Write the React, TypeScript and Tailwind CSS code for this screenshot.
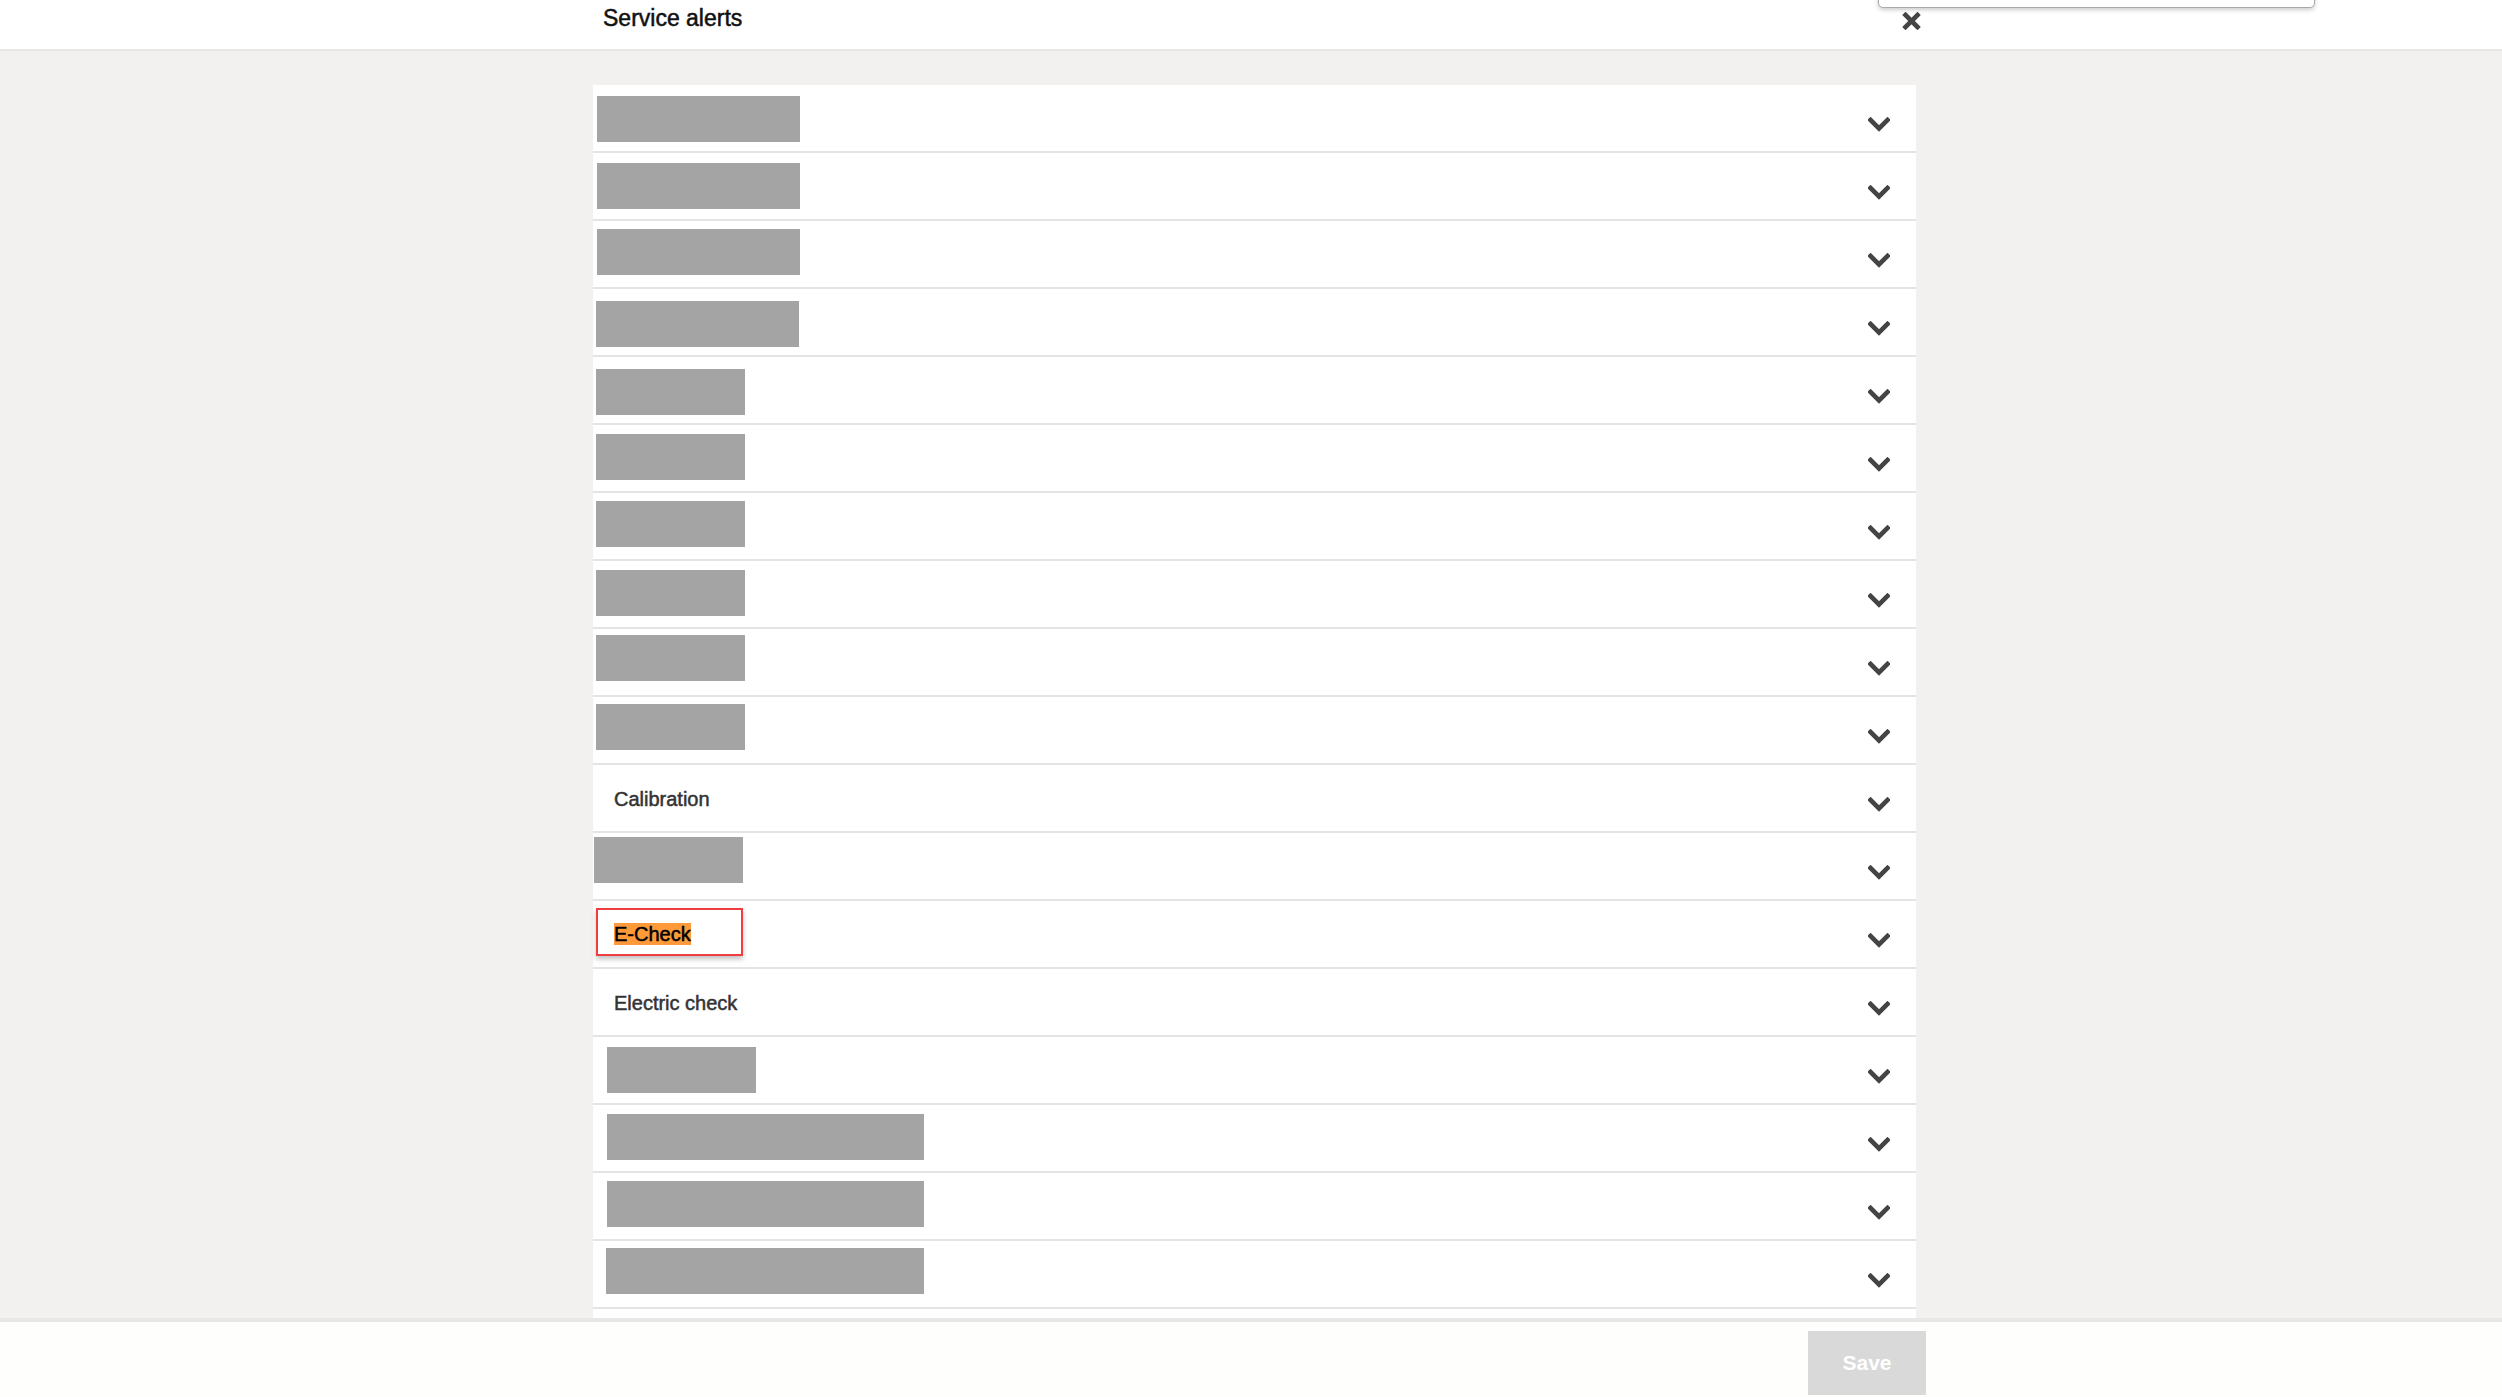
import React from 'react';

type Row =
  | { kind: 'block'; left: number; width: number; top: number }
  | { kind: 'text'; label: string }
  | { kind: 'selected'; label: string };

const rows: Row[] = [
  { kind: 'block', left: 4, width: 203, top: 11 },
  { kind: 'block', left: 4, width: 203, top: 10 },
  { kind: 'block', left: 4, width: 203, top: 8 },
  { kind: 'block', left: 3, width: 203, top: 12 },
  { kind: 'block', left: 3, width: 149, top: 12 },
  { kind: 'block', left: 3, width: 149, top: 9 },
  { kind: 'block', left: 3, width: 149, top: 8 },
  { kind: 'block', left: 3, width: 149, top: 9 },
  { kind: 'block', left: 3, width: 149, top: 6 },
  { kind: 'block', left: 3, width: 149, top: 7 },
  { kind: 'text', label: 'Calibration' },
  { kind: 'block', left: 1, width: 149, top: 4 },
  { kind: 'selected', label: 'E-Check' },
  { kind: 'text', label: 'Electric check' },
  { kind: 'block', left: 14, width: 149, top: 10 },
  { kind: 'block', left: 14, width: 317, top: 9 },
  { kind: 'block', left: 14, width: 317, top: 8 },
  { kind: 'block', left: 13, width: 318, top: 7 },
  { kind: 'block', left: 14, width: 149, top: 9 },
];

const Chevron = () => (
  <svg width="22" height="15" viewBox="0 0 22 15" className="block">
    <polyline
      points="2.5,3 11,11.5 19.5,3"
      fill="none"
      stroke="#444444"
      strokeWidth="4.6"
      strokeLinecap="square"
      strokeLinejoin="miter"
    />
  </svg>
);

const CloseIcon = () => (
  <svg width="19" height="18" viewBox="0 0 19 18" className="block">
    <path d="M3.5 3 L15.5 15 M15.5 3 L3.5 15" stroke="#444444" strokeWidth="4.6" strokeLinecap="square" />
  </svg>
);

const AlertRow: React.FC<{ row: Row }> = ({ row }) => {
  return (
    <div className="flex h-[68px] border-b-2 border-[#e4e4e4]">
      <div className="flex-1 flex">
        {row.kind === 'block' && (
          <div
            className="h-[46px] bg-[#a4a4a4]"
            style={{ marginLeft: row.left, marginTop: row.top, width: row.width }}
          />
        )}
        {row.kind === 'text' && (
          <div className="self-center pl-[21px] pt-[2px] text-[20px] leading-[23px] text-[#333333] [-webkit-text-stroke:0.5px_#333333]">
            {row.label}
          </div>
        )}
        {row.kind === 'selected' && (
          <div className="ml-[3px] mt-[7px] w-[147px] h-[48px] border-2 border-[#ef3e42] shadow-[0_3px_5px_rgba(0,0,0,0.25)] flex items-center pl-[16px] pt-[4px]">
            <span className="bg-[#ff9a3b] text-[20px] leading-[22px] text-black [-webkit-text-stroke:0.5px_#000000]">
              {row.label}
            </span>
          </div>
        )}
      </div>
      <div className="mt-[32px] mr-[26px]">
        <Chevron />
      </div>
    </div>
  );
};

export default function App() {
  return (
    <div
      className="relative h-[1397px] w-[2502px] flex flex-col overflow-hidden bg-white"
      style={{ fontFamily: '"Liberation Sans", Arial, sans-serif' }}
    >
      {/* header */}
      <div className="h-[51px] shrink-0 bg-white border-b-2 border-[#e6e6e6] flex">
        <div className="ml-[603px] w-[1318px] flex justify-between">
          <div className="pt-[5px] text-[23px] leading-[26px] text-[#111111] [-webkit-text-stroke:0.5px_#111111]">
            Service alerts
          </div>
          <div className="mt-[12px]">
            <CloseIcon />
          </div>
        </div>
      </div>

      {/* dropdown peeking in from the top */}
      <div className="absolute left-[1878px] top-[-24px] w-[437px] h-[32px] bg-white border border-[#a9a9a9] rounded-[5px] shadow-[0_2px_4px_rgba(0,0,0,0.2)]" />

      {/* list */}
      <div className="flex-1 overflow-hidden bg-[#f2f1ef]">
        <div className="ml-[593px] mt-[34px] w-[1323px] bg-white">
          {rows.map((row, i) => (
            <AlertRow key={i} row={row} />
          ))}
        </div>
      </div>

      {/* footer */}
      <div className="h-[79px] shrink-0 border-t-[4px] border-[#e7e7e5] bg-[#fefefd] flex">
        <button className="ml-[1808px] mt-[9px] w-[118px] h-[64px] bg-[#d9d9d9] text-white font-bold text-[21px]">
          Save
        </button>
      </div>
    </div>
  );
}
